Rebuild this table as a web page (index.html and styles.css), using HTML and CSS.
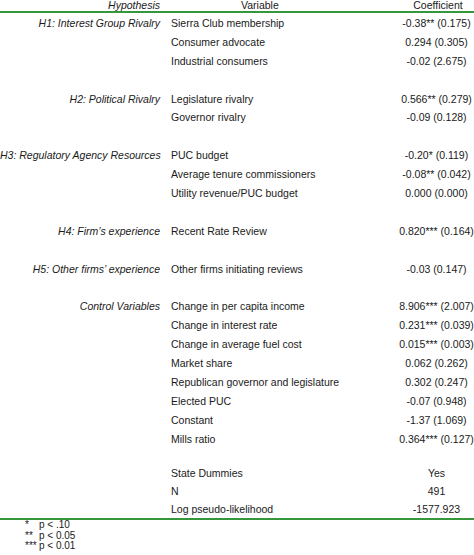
FILE: index.html
```html
<!DOCTYPE html>
<html>
<head>
<meta charset="utf-8">
<link rel="stylesheet" href="styles.css">
</head>
<body>
<div class="table">
  <div class="row head">
    <div class="hyp">Hypothesis</div>
    <div class="var var-head">Variable</div>
    <div class="coef">Coefficient</div>
  </div>
  <div class="body">
    <div class="row"><div class="hyp">H1: Interest Group Rivalry</div><div class="var">Sierra Club membership</div><div class="coef">-0.38** (0.175)</div></div>
    <div class="row"><div class="hyp"></div><div class="var">Consumer advocate</div><div class="coef">0.294 (0.305)</div></div>
    <div class="row"><div class="hyp"></div><div class="var">Industrial consumers</div><div class="coef">-0.02 (2.675)</div></div>
    <div class="row blank"></div>
    <div class="row"><div class="hyp">H2: Political Rivalry</div><div class="var">Legislature rivalry</div><div class="coef">0.566** (0.279)</div></div>
    <div class="row"><div class="hyp"></div><div class="var">Governor rivalry</div><div class="coef">-0.09 (0.128)</div></div>
    <div class="row blank"></div>
    <div class="row"><div class="hyp">H3: Regulatory Agency Resources</div><div class="var">PUC budget</div><div class="coef">-0.20* (0.119)</div></div>
    <div class="row"><div class="hyp"></div><div class="var">Average tenure commissioners</div><div class="coef">-0.08** (0.042)</div></div>
    <div class="row"><div class="hyp"></div><div class="var">Utility revenue/PUC budget</div><div class="coef">0.000 (0.000)</div></div>
    <div class="row blank"></div>
    <div class="row"><div class="hyp">H4: Firm’s experience</div><div class="var">Recent Rate Review</div><div class="coef">0.820*** (0.164)</div></div>
    <div class="row blank"></div>
    <div class="row"><div class="hyp">H5: Other firms’ experience</div><div class="var">Other firms initiating reviews</div><div class="coef">-0.03 (0.147)</div></div>
    <div class="row blank"></div>
    <div class="row"><div class="hyp">Control Variables</div><div class="var">Change in per capita income</div><div class="coef">8.906*** (2.007)</div></div>
    <div class="row"><div class="hyp"></div><div class="var">Change in interest rate</div><div class="coef">0.231*** (0.039)</div></div>
    <div class="row"><div class="hyp"></div><div class="var">Change in average fuel cost</div><div class="coef">0.015*** (0.003)</div></div>
    <div class="row"><div class="hyp"></div><div class="var">Market share</div><div class="coef">0.062 (0.262)</div></div>
    <div class="row"><div class="hyp"></div><div class="var">Republican governor and legislature</div><div class="coef">0.302 (0.247)</div></div>
    <div class="row"><div class="hyp"></div><div class="var">Elected PUC</div><div class="coef">-0.07 (0.948)</div></div>
    <div class="row"><div class="hyp"></div><div class="var">Constant</div><div class="coef">-1.37 (1.069)</div></div>
    <div class="row"><div class="hyp"></div><div class="var">Mills ratio</div><div class="coef">0.364*** (0.127)</div></div>
    <div class="row blank short-gap"></div>
    <div class="row tight"><div class="hyp"></div><div class="var">State Dummies</div><div class="coef">Yes</div></div>
    <div class="row tight"><div class="hyp"></div><div class="var">N</div><div class="coef">491</div></div>
    <div class="row tight last"><div class="hyp"></div><div class="var">Log pseudo-likelihood</div><div class="coef">-1577.923</div></div>
  </div>
  <div class="notes">
    <div class="note"><span class="stars">*</span>p &lt; .10</div>
    <div class="note"><span class="stars">**</span>p &lt; 0.05</div>
    <div class="note"><span class="stars">***</span>p &lt; 0.01</div>
  </div>
</div>
</body>
</html>
```

FILE: styles.css
```css
html, body {
  margin: 0;
  padding: 0;
  background: #ffffff;
}

body {
  font-family: "Liberation Sans", Arial, sans-serif;
  font-size: 10.5px;
  color: #1a1a1a;
  width: 474px;
  height: 555px;
  overflow: hidden;
}

.table {
  width: 474px;
}

.row {
  display: grid;
  grid-template-columns: 165px 234px 75px;
  height: 18.9px;
  line-height: 18.9px;
  white-space: nowrap;
}

.hyp {
  text-align: right;
  padding-right: 5px;
  font-style: italic;
}

.var {
  padding-left: 6px;
}

.coef {
  text-align: center;
  overflow: visible;
}

.head {
  height: 11px;
  line-height: 10px;
  border-bottom: 2px solid #35963a;
}

.var-head {
  padding-left: 76px;
}

.head .coef {
  padding-left: 3px;
}

.body {
  padding-top: 1px;
  border-bottom: 2px solid #35963a;
}

.short-gap {
  height: 17px;
}

.tight {
  height: 17.8px;
  line-height: 17.8px;
}

.last {
  height: 17px;
}

.notes {
  padding-left: 25px;
  line-height: 10.5px;
  font-size: 10px;
}

.note {
  display: flex;
}

.stars {
  width: 14px;
}
```
